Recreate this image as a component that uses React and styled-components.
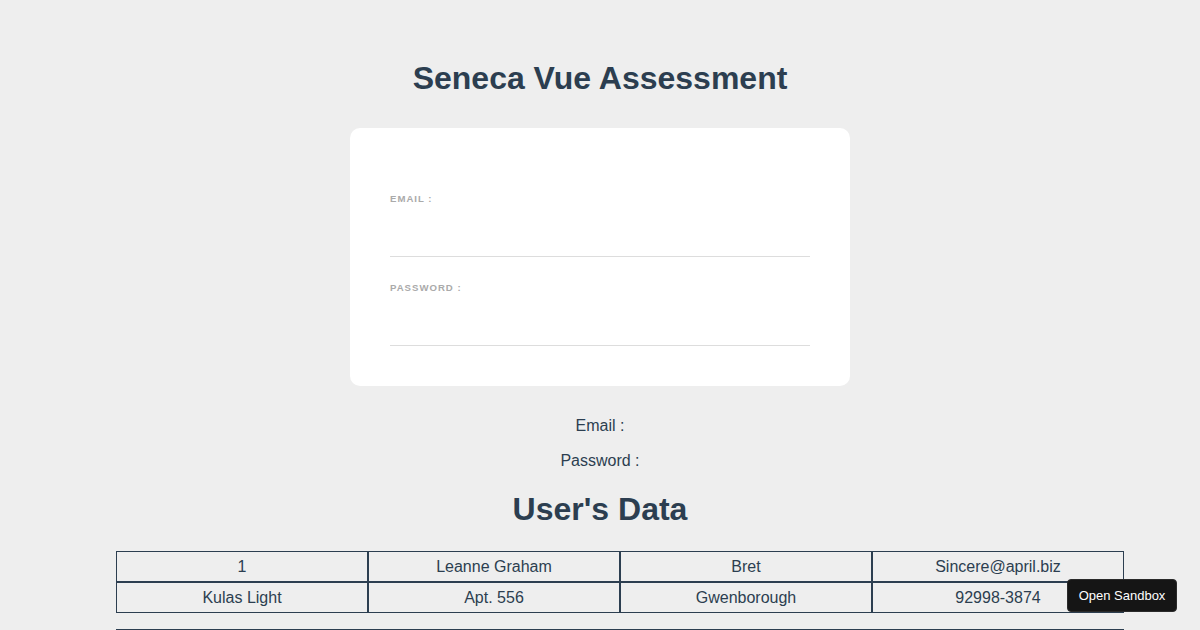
import React from "react";
import styled, { createGlobalStyle } from "styled-components";

const GlobalStyle = createGlobalStyle`
  body {
    margin: 0;
    background: #eeeeee;
  }
`;

const AppWrap = styled.div`
  font-family: "Liberation Sans", Arial, Helvetica, sans-serif;
  text-align: center;
  color: #2c3e50;
  padding-top: 60px;
`;

const Title = styled.h1`
  font-size: 32px;
  line-height: 37px;
  margin: 0 0 31px;
`;

const Form = styled.form`
  max-width: 420px;
  margin: 0 auto 30px;
  background: white;
  text-align: left;
  padding: 40px;
  border-radius: 10px;
`;

const Label = styled.label`
  color: #aaa;
  display: inline-block;
  margin: 25px 0 15px;
  font-size: 9.6px;
  text-transform: uppercase;
  letter-spacing: 1px;
  font-weight: bold;
`;

const Input = styled.input`
  display: block;
  padding: 10px 6px;
  width: 100%;
  box-sizing: border-box;
  border: none;
  border-bottom: 1px solid #ddd;
  color: #555;
  font-family: inherit;
  font-size: 13px;
  height: 38px;
  outline: none;
`;

const Line = styled.p`
  margin: 0 0 16px;
  font-size: 16px;
  line-height: 19px;
`;

const SubTitle = styled.h2`
  font-size: 32px;
  line-height: 37px;
  margin: 21px 0 23px;
`;

const UserList = styled.div`
  padding-left: 116px;
`;

const Table = styled.table`
  width: 1008px;
  margin: 0 0 16px;
  border-collapse: separate;
  border-spacing: 0;
  table-layout: fixed;
`;

const Td = styled.td`
  border: 1px solid #2c3e50;
  padding: 5px 4px;
  font-size: 16px;
  line-height: 19px;
  text-align: center;
`;

const SandboxButton = styled.button`
  position: fixed;
  right: 23px;
  bottom: 18px;
  width: 110px;
  height: 33px;
  background: #151515;
  color: #fff;
  border: 1px solid #2a2a2a;
  border-radius: 4px;
  font-family: "Liberation Sans", Arial, sans-serif;
  font-size: 13px;
  cursor: pointer;
`;

const users = [
  {
    rows: [
      ["1", "Leanne Graham", "Bret", "Sincere@april.biz"],
      ["Kulas Light", "Apt. 556", "Gwenborough", "92998-3874"],
    ],
  },
  {
    rows: [
      ["2", "Ervin Howell", "Antonette", "Shanna@melissa.tv"],
      ["Victor Plains", "Suite 879", "Wisokyburgh", "90566-7771"],
    ],
  },
];

export default function App() {
  return (
    <>
      <GlobalStyle />
      <AppWrap>
        <Title>Seneca Vue Assessment</Title>
        <Form onSubmit={(e) => e.preventDefault()}>
          <Label>Email :</Label>
          <Input type="email" />
          <Label>Password :</Label>
          <Input type="password" />
        </Form>
        <Line>Email :</Line>
        <Line>Password :</Line>
        <SubTitle>User's Data</SubTitle>
        <UserList>
          {users.map((u, i) => (
            <Table key={i}>
              <tbody>
                {u.rows.map((r, j) => (
                  <tr key={j}>
                    {r.map((c, k) => (
                      <Td key={k}>{c}</Td>
                    ))}
                  </tr>
                ))}
              </tbody>
            </Table>
          ))}
        </UserList>
      </AppWrap>
      <SandboxButton>Open Sandbox</SandboxButton>
    </>
  );
}
